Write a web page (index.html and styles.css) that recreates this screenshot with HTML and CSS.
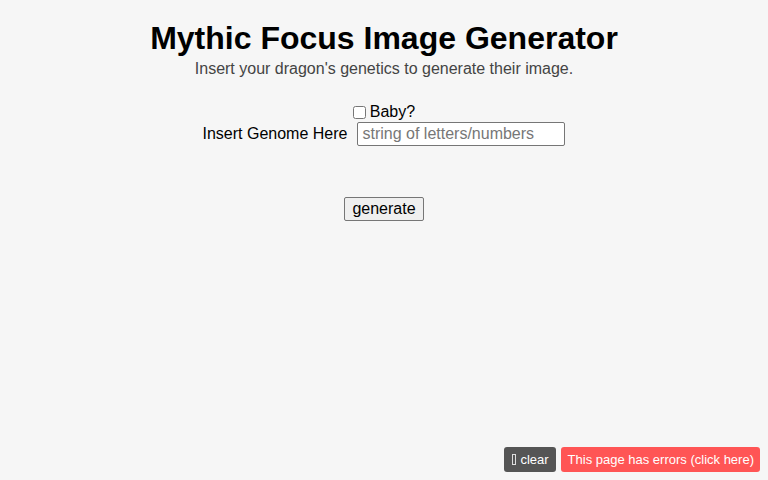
FILE: index.html
```html
<!DOCTYPE html>
<html>
<head>
<meta charset="utf-8">
<link rel="stylesheet" href="styles.css">
</head>
<body>
<main class="page">
  <h1 class="title">Mythic Focus Image Generator</h1>
  <p class="subtitle">Insert your dragon's genetics to generate their image.</p>
  <div class="form">
    <label class="baby"><input type="checkbox" class="check"> Baby?</label>
    <div class="genome">
      <label class="genome-label" for="g">Insert Genome Here</label>
      <input id="g" class="genome-input" type="text" placeholder="string of letters/numbers">
    </div>
    <button class="generate">generate</button>
  </div>
</main>
<div class="errors">
  <button class="clear"><span class="tofu"></span>clear</button>
  <button class="err">This page has errors (click here)</button>
</div>
</body>
</html>
```
FILE: styles.css
```css
html, body { margin: 0; padding: 0; }
body {
  background: #f6f6f6;
  font-family: "Liberation Sans", Arial, sans-serif;
  color: #000;
  width: 768px;
  height: 480px;
  overflow: hidden;
  position: relative;
}
.page {
  display: flex;
  flex-direction: column;
  align-items: center;
  padding-top: 19px;
}
.title {
  margin: 0;
  font-size: 32px;
  font-weight: bold;
  line-height: 38px;
}
.subtitle {
  margin: 2px 0 0;
  font-size: 16px;
  line-height: 20px;
  color: #444;
}
.form {
  display: flex;
  flex-direction: column;
  align-items: center;
  margin-top: 23px;
}
.baby {
  font-size: 16px;
  line-height: 20px;
  display: flex;
  align-items: center;
}
.check {
  margin: 0 4px 0 0;
  width: 13px;
  height: 13px;
}
.genome {
  display: flex;
  align-items: center;
  gap: 10px;
}
.genome-label { font-size: 16px; }
.genome-input {
  width: 208px;
  height: 24px;
  box-sizing: border-box;
  border: 1px solid #767676;
  border-radius: 2px;
  background: #fff;
  font-family: "Liberation Sans", Arial, sans-serif;
  font-size: 16px;
  padding: 1px 4px;
}
.genome-input::placeholder { color: #777; }
.generate {
  margin-top: 51px;
  font-family: "Liberation Sans", Arial, sans-serif;
  font-size: 16px;
  height: 24px;
  padding: 0 7px;
  border: 1px solid #767676;
  border-radius: 2px;
  background: #efefef;
  color: #000;
}
.errors {
  position: absolute;
  right: 8px;
  bottom: 8px;
  display: flex;
  gap: 5px;
}
.errors button {
  border: none;
  border-radius: 3px;
  color: #fff;
  font-family: "Liberation Sans", Arial, sans-serif;
  font-size: 13px;
  height: 25px;
}
.clear {
  background: #555;
  display: flex;
  align-items: center;
  padding: 0 7px 0 8px;
}
.tofu {
  display: inline-block;
  width: 2px;
  height: 9px;
  border: 1px solid #ddd;
  margin-right: 4px;
}
.err { background: #f55; padding: 0 6px 0 7px; }
```
